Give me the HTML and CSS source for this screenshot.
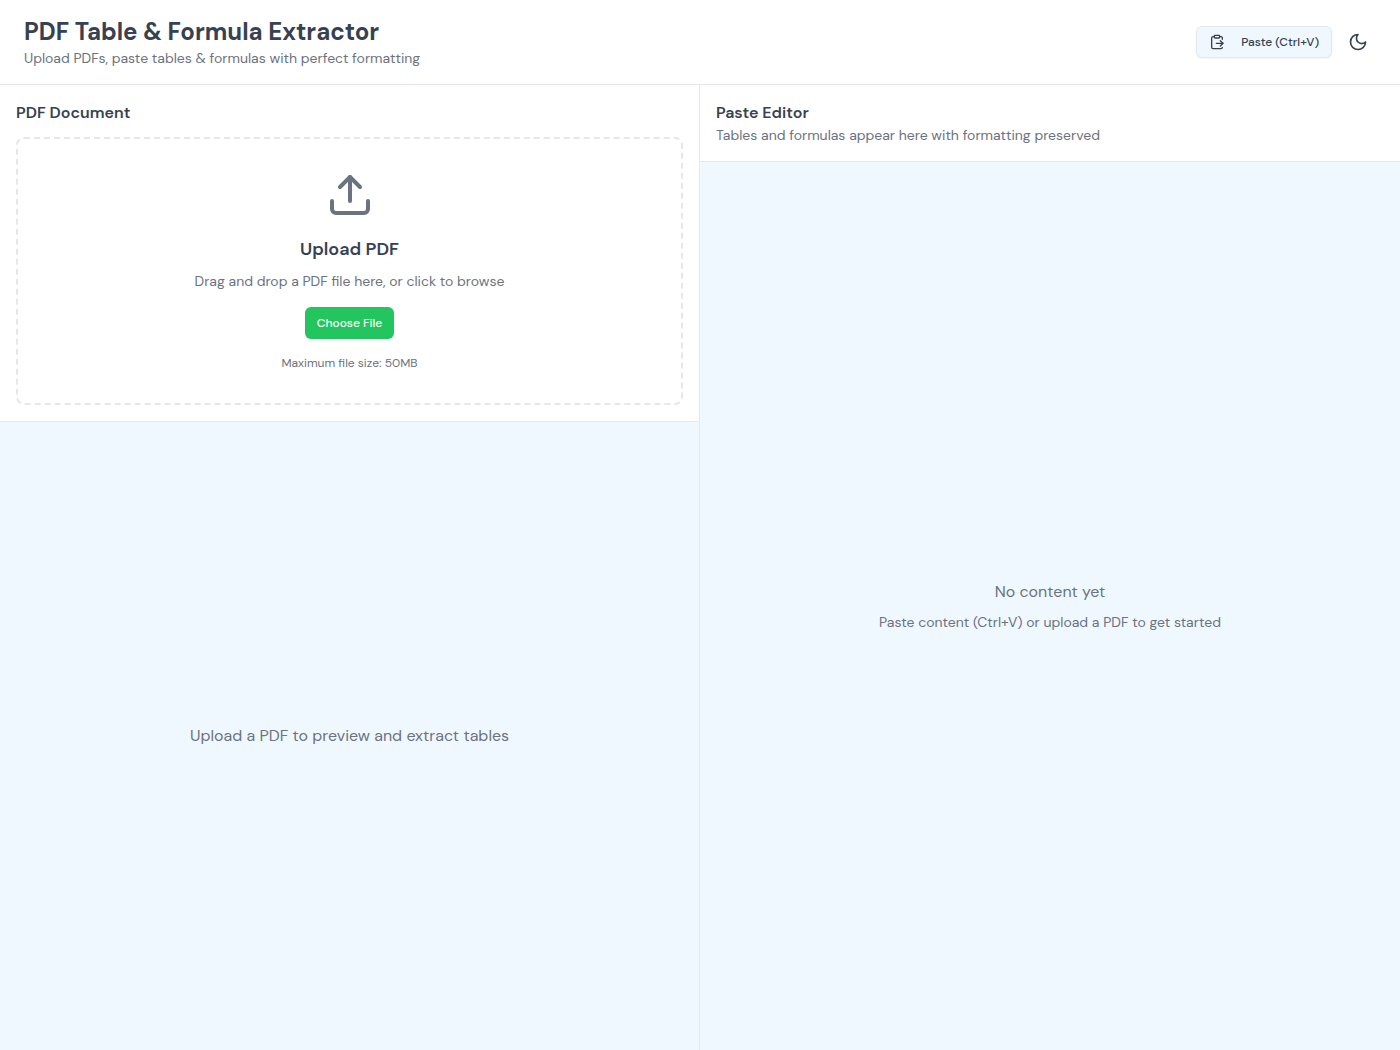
FILE: index.html
```html
<!DOCTYPE html>
<html lang="en">
<head>
  <meta charset="UTF-8">
  <meta name="viewport" content="width=device-width, initial-scale=1.0">
  <title>PDF Table &amp; Formula Extractor</title>
  <link rel="stylesheet" href="styles.css">
</head>
<body>
  <header class="header">
    <div>
      <h1 class="title">PDF Table &amp; Formula Extractor</h1>
      <p class="muted">Upload PDFs, paste tables &amp; formulas with perfect formatting</p>
    </div>
    <div class="actions">
      <button class="btn btn-outline" type="button">
        <svg class="icon" width="16" height="16" viewBox="0 0 24 24">
          <path d="M15 2H9a1 1 0 0 0-1 1v2c0 .6.4 1 1 1h6c.6 0 1-.4 1-1V3c0-.6-.4-1-1-1Z"/>
          <path d="M8 4H6a2 2 0 0 0-2 2v14a2 2 0 0 0 2 2h12a2 2 0 0 0 2-2M16 4h2a2 2 0 0 1 2 2v2M11 14h10"/>
          <path d="m17 10 4 4-4 4"/>
        </svg>
        Paste (Ctrl+V)
      </button>
      <button class="btn-icon" type="button" aria-label="Toggle theme">
        <svg class="icon" width="20" height="20" viewBox="0 0 24 24">
          <path d="M12 3a6 6 0 0 0 9 9 9 9 0 1 1-9-9Z"/>
        </svg>
      </button>
    </div>
  </header>

  <main class="panels">
    <section class="panel panel-left">
      <div class="panel-header">
        <h2 class="panel-title">PDF Document</h2>
        <div class="dropzone">
          <svg class="icon upload-icon" width="48" height="48" viewBox="0 0 24 24">
            <path d="M21 15v4a2 2 0 0 1-2 2H5a2 2 0 0 1-2-2v-4"/>
            <path d="m17 8-5-5-5 5"/>
            <path d="M12 3v12"/>
          </svg>
          <h3 class="drop-title">Upload PDF</h3>
          <p class="muted">Drag and drop a PDF file here, or click to browse</p>
          <button class="btn btn-primary" type="button">Choose File</button>
          <p class="hint">Maximum file size: 50MB</p>
        </div>
      </div>
      <div class="panel-body">
        <p class="empty-text">Upload a PDF to preview and extract tables</p>
      </div>
    </section>

    <section class="panel">
      <div class="panel-header">
        <h2 class="panel-title">Paste Editor</h2>
        <p class="muted">Tables and formulas appear here with formatting preserved</p>
      </div>
      <div class="panel-body">
        <p class="empty-text">No content yet</p>
        <p class="muted">Paste content (Ctrl+V) or upload a PDF to get started</p>
      </div>
    </section>
  </main>
</body>
</html>
```
FILE: styles.css
```css
* {
  box-sizing: border-box;
}

body {
  display: flex;
  flex-direction: column;
  min-height: 100vh;
  margin: 0;
  font-family: "DM Sans", Inter, sans-serif;
  font-size: 16px;
  line-height: 24px;
  color: #374151;
  background-color: #f0f8ff;
}

h1, h2, h3, p {
  margin: 0;
}

.muted {
  font-size: 14px;
  line-height: 20px;
  color: #6b7280;
}

.icon {
  flex-shrink: 0;
  fill: none;
  stroke: currentColor;
  stroke-width: 2;
  stroke-linecap: round;
  stroke-linejoin: round;
}

/* Header */
.header {
  display: flex;
  align-items: center;
  justify-content: space-between;
  padding: 16px 24px;
  background-color: #fff;
  border-bottom: 1px solid #e5e7eb;
}

.title {
  font-size: 24px;
  line-height: 32px;
  font-weight: 700;
}

.actions {
  display: flex;
  align-items: center;
  gap: 8px;
}

/* Buttons */
.btn {
  display: inline-flex;
  align-items: center;
  justify-content: center;
  gap: 16px;
  height: 32px;
  padding: 0 12px;
  border: none;
  border-radius: 6px;
  font-family: inherit;
  font-size: 12px;
  line-height: 16px;
  font-weight: 500;
  white-space: nowrap;
  cursor: pointer;
}

.btn-outline {
  color: #374151;
  background-color: #f0f8ff;
  border: 1px solid #e5e7eb;
  box-shadow: 0 1px 2px rgba(0, 0, 0, 0.05);
}

.btn-primary {
  color: #fff;
  background-color: #22c55e;
}

.btn-icon {
  display: flex;
  align-items: center;
  justify-content: center;
  width: 36px;
  height: 36px;
  padding: 0;
  border: none;
  border-radius: 6px;
  color: #374151;
  background: none;
  cursor: pointer;
}

/* Panels */
.panels {
  display: grid;
  grid-template-columns: 1fr 1fr;
  flex: 1;
}

.panel {
  display: flex;
  flex-direction: column;
}

.panel-left {
  border-right: 1px solid #e5e7eb;
}

.panel-header {
  padding: 16px;
  background-color: #fff;
  border-bottom: 1px solid #e5e7eb;
}

.panel-title {
  font-size: 16px;
  line-height: 24px;
  font-weight: 600;
}

.panel-body {
  display: flex;
  flex-direction: column;
  align-items: center;
  justify-content: center;
  gap: 8px;
  flex: 1;
  text-align: center;
}

.empty-text {
  color: #6b7280;
}

/* Upload box */
.dropzone {
  display: flex;
  flex-direction: column;
  align-items: center;
  gap: 16px;
  margin-top: 12px;
  padding: 32px;
  border: 2px dashed #e5e7eb;
  border-radius: 8px;
  text-align: center;
}

.upload-icon {
  color: #6b7280;
}

.drop-title {
  margin-bottom: -8px;
  font-size: 18px;
  line-height: 28px;
  font-weight: 600;
}

.hint {
  font-size: 12px;
  line-height: 16px;
  color: #6b7280;
}
```
